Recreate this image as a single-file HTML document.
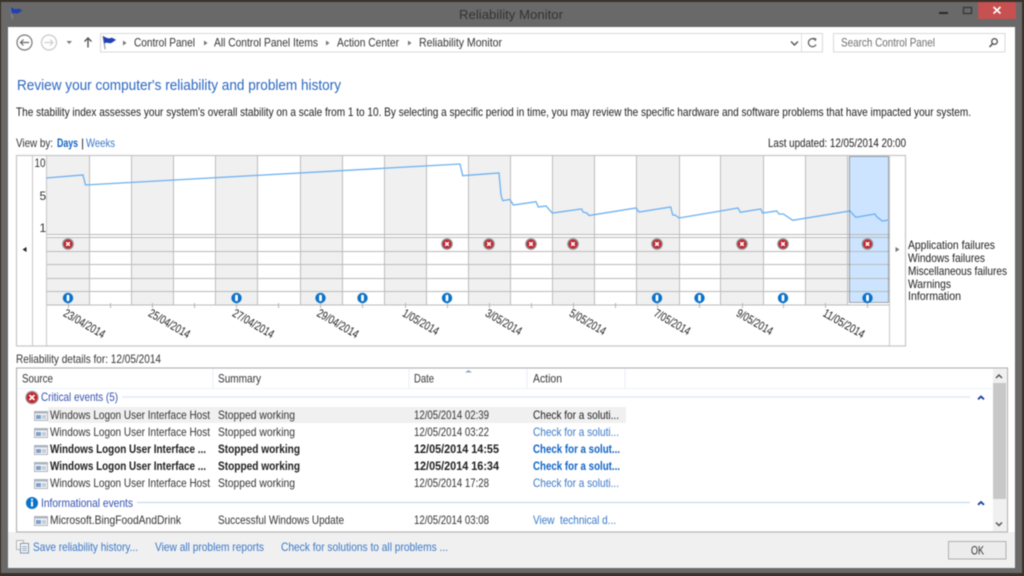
<!DOCTYPE html>
<html><head><meta charset="utf-8"><title>Reliability Monitor</title>
<style>
html,body{margin:0;padding:0;width:1024px;height:576px;overflow:hidden;background:#3a322b}
svg{display:block;filter:blur(.4px)}
text{font-family:"Liberation Sans",sans-serif;font-size:12px;fill:#1c1c1c}
.b{font-weight:bold}
.l{fill:#3a78c8}
.lb{fill:#0f62c4;font-weight:bold}
.g{fill:#3f3f3f}
.h{fill:#333}
.c{fill:#3350b0}
</style></head><body>
<svg width="1024" height="576" viewBox="0 0 1024 576" xmlns="http://www.w3.org/2000/svg">
<defs>
<g id="err"><circle r="5.8" fill="#8f8f8f"/><circle r="4.4" fill="#c4202e"/><path d="M-1.8-1.8L1.8 1.8M1.8-1.8L-1.8 1.8" stroke="#fff" stroke-width="1.5"/></g>
<g id="inf"><circle r="5.2" fill="#0b72c9"/><rect x="-1.4" y="-3.2" width="2.8" height="6.4" rx="1.2" fill="#fff"/></g>
<g id="row"><rect x="0" y="0" width="14" height="10" fill="#aeb5bd"/><rect x="1" y="1" width="12" height="8" fill="#f4f6f8"/><rect x="1" y="1" width="12" height="1.5" fill="#aab4c2"/><rect x="2" y="4" width="5" height="4" fill="#7f9ecb"/><rect x="8" y="4" width="4" height="4" fill="#c3ccd8"/></g>
<g id="chev"><path d="M-3 1.800L0-1L3 1.800" fill="none" stroke="#1a3f9c" stroke-width="1.800"/></g>
<g id="flag"><path d="M0 0L2 12" stroke="#8a8fa6" stroke-width="1" fill="none"/><path d="M0 0C3 1.500 5 3 8 1.500L12 3.500C9 5 8 7 5.500 6.500C4 6 2 6 1.200 7Z" fill="#2340b0"/></g>
</defs>

<!-- wallpaper + window frame -->
<rect width="1024" height="576" fill="#3a322b"/>
<rect x="1" y="2" width="1021" height="571" fill="#696969"/>
<rect x="8" y="27" width="1007" height="541" fill="#fff"/>
<rect x="8" y="532" width="1007" height="36" fill="#f0f0f0"/>

<!-- title bar -->
<use href="#flag" transform="translate(10.500,7)"/>
<text x="459" y="19" textLength="104" lengthAdjust="spacingAndGlyphs" style="font-size:13px;fill:#333">Reliability Monitor</text>
<rect x="939" y="12" width="9" height="2" fill="#2a2a2a"/>
<rect x="963.500" y="7.500" width="8" height="6" fill="none" stroke="#333" stroke-width="1.200"/>
<rect x="978" y="2" width="38" height="17" fill="#c75050"/>
<path d="M993.500 7L1000.500 13.500M1000.500 7L993.500 13.500" stroke="#fff" stroke-width="1.700"/>

<!-- nav -->
<circle cx="24.500" cy="42.500" r="7.500" fill="#fff" stroke="#777" stroke-width="1.200"/>
<path d="M20.500 42.500H29M23.500 39.500L20.500 42.500L23.500 45.500" fill="none" stroke="#666" stroke-width="1.200"/>
<circle cx="49" cy="42.500" r="7.500" fill="#fff" stroke="#c8c8c8" stroke-width="1.200"/>
<path d="M44.500 42.500H53M50 39.500L53 42.500L50 45.500" fill="none" stroke="#cfcfcf" stroke-width="1.200"/>
<path d="M66.500 41H72L69.200 44Z" fill="#777"/>
<path d="M88 47.500V38M84.500 41.500L88 38L91.500 41.500" fill="none" stroke="#555" stroke-width="1.400"/>
<rect x="100.500" y="33.500" width="722" height="18.500" fill="#fff" stroke="#d9d9d9"/>
<path d="M801.500 34V52" stroke="#e2e2e2"/>
<use href="#flag" transform="translate(103,36) scale(1.100)"/>
<path d="M123 40.500L126.500 43L123 45.500ZM204 40.500L207.500 43L204 45.500ZM326 40.500L329.500 43L326 45.500ZM408 40.500L411.500 43L408 45.500Z" fill="#777"/>
<text x="134" y="46.500" textLength="61" lengthAdjust="spacingAndGlyphs" class="h">Control Panel</text>
<text x="214" y="46.500" textLength="104" lengthAdjust="spacingAndGlyphs" class="h">All Control Panel Items</text>
<text x="337" y="46.500" textLength="62" lengthAdjust="spacingAndGlyphs" class="h">Action Center</text>
<text x="419" y="46.500" textLength="83" lengthAdjust="spacingAndGlyphs" class="h">Reliability Monitor</text>
<path d="M791 41.500L794.500 45L798 41.500" fill="none" stroke="#555" stroke-width="1.400"/>
<path d="M815.800 40.500A4 4 0 1 0 816 44.500" fill="none" stroke="#666" stroke-width="1.300"/><path d="M813 37.500L816.500 38.500L815.500 41.500Z" fill="#666"/>
<rect x="833.500" y="33.500" width="171.500" height="18.500" fill="#fff" stroke="#d9d9d9"/>
<text x="841" y="46.500" textLength="94" lengthAdjust="spacingAndGlyphs" style="fill:#6d6d6d">Search Control Panel</text>
<circle cx="994.500" cy="41.500" r="2.800" fill="none" stroke="#555" stroke-width="1.300"/><path d="M992.500 43.800L989.500 47" stroke="#555" stroke-width="1.600"/>

<!-- heading -->
<text x="17" y="90" textLength="324" lengthAdjust="spacingAndGlyphs" style="font-size:15px;fill:#2a66c0">Review your computer's reliability and problem history</text>
<text x="16" y="116" textLength="955" lengthAdjust="spacingAndGlyphs">The stability index assesses your system's overall stability on a scale from 1 to 10. By selecting a specific period in time, you may review the specific hardware and software problems that have impacted your system.</text>
<text x="16" y="147" textLength="37" lengthAdjust="spacingAndGlyphs" class="h">View by:</text>
<text x="57" y="147" textLength="21" lengthAdjust="spacingAndGlyphs" class="lb">Days</text>
<text x="81" y="147" class="h">|</text>
<text x="86" y="147" textLength="29" lengthAdjust="spacingAndGlyphs" class="l">Weeks</text>
<text x="768" y="147" textLength="138" lengthAdjust="spacingAndGlyphs">Last updated: 12/05/2014 20:00</text>

<!-- chart shading -->
<g fill="#f0f0f0">
<rect x="46" y="156" width="43" height="149"/><rect x="131" y="156" width="42" height="149"/><rect x="215" y="156" width="42" height="149"/><rect x="300" y="156" width="42" height="149"/><rect x="384" y="156" width="42" height="149"/><rect x="468" y="156" width="42" height="149"/><rect x="552" y="156" width="42" height="149"/><rect x="636" y="156" width="43" height="149"/><rect x="720" y="156" width="43" height="149"/><rect x="805" y="156" width="44" height="149"/>
</g>
<rect x="849" y="156" width="39.500" height="146.500" fill="#cce4ff"/>
<rect x="46" y="235" width="844" height="2" fill="#fff"/>
<rect x="849" y="235" width="39.500" height="2" fill="#cce4ff"/>
<!-- chart lines -->
<g stroke="#bcbcbc" stroke-width="1" fill="none">
<path d="M89.500 156V305M131.500 156V305M173.500 156V305M215.500 156V305M257.500 156V305M300.500 156V305M342.500 156V305M384.500 156V305M426.500 156V305M468.500 156V305M510.500 156V305M552.500 156V305M594.500 156V305M636.500 156V305M679.500 156V305M720.500 156V305M763.500 156V305M805.500 156V305M847.500 156V305"/>
<path d="M46 234.500H889M46 237.500H889M46 251.500H889M46 264.500H889M46 278.500H889M46 291.500H889M46 305H889" stroke="#bbb"/>
</g>
<path d="M68.500 303V308M110.500 303V308M152.500 303V308M194.500 303V308M236.500 303V308M278.500 303V308M320.500 303V308M362.500 303V308M405.500 303V308M447.500 303V308M489.500 303V308M531.500 303V308M573.500 303V308M615.500 303V308M657.500 303V308M699.500 303V308M742.500 303V308M783.500 303V308M825.500 303V308M867.500 303V308" stroke="#b5b5b5"/>
<rect x="849.500" y="156.500" width="39" height="146" fill="none" stroke="#555" stroke-dasharray="1 1"/>
<!-- chart frame -->
<rect x="16.500" y="155.500" width="889" height="190.500" fill="none" stroke="#c6c6c6" stroke-width="1.200"/>
<path d="M32.500 155.500V346M46.500 155.500V346M889.500 155.500V346" stroke="#c6c6c6" fill="none"/>
<!-- stability line -->
<polyline fill="none" stroke="#6cb0f2" stroke-width="1.300" points="46,178 83,175 85.500,185 460,164 462.700,175.700 499,173 501,195 502.700,200.700 510,199.500 513.300,205 536,201.700 538.300,207 546,206 552.300,213 581.700,209 583,212 586.700,213 589,215.500 636,208 639,212 670.700,207 672.700,215 675,215 679,218 720.700,211 738,208 740.300,212.300 760.700,209 762.700,213 776.700,211 779,214 783.300,214 792.700,220.300 850,211 855.700,217.300 875,214 876.700,216.700 882.300,221 888.300,220"/>
<text x="34.500" y="167" textLength="11" lengthAdjust="spacingAndGlyphs" class="h">10</text>
<text x="39.500" y="200" class="h">5</text>
<text x="39.500" y="232" class="h">1</text>
<path d="M26.500 247L22.500 249.500L26.500 252Z" fill="#222"/>
<path d="M895.500 247L899.500 249.500L895.500 252Z" fill="#777"/>
<!-- event icons -->
<use href="#err" x="68" y="244"/><use href="#err" x="447" y="244"/><use href="#err" x="489" y="244"/><use href="#err" x="531" y="244"/><use href="#err" x="573" y="244"/><use href="#err" x="657" y="244"/><use href="#err" x="742" y="244"/><use href="#err" x="783" y="244"/><use href="#err" x="867.500" y="244"/>
<use href="#inf" x="68" y="298"/><use href="#inf" x="236.500" y="298"/><use href="#inf" x="320.500" y="298"/><use href="#inf" x="362.500" y="298"/><use href="#inf" x="447" y="298"/><use href="#inf" x="657" y="298"/><use href="#inf" x="699.500" y="298"/><use href="#inf" x="783" y="298"/><use href="#inf" x="867.500" y="298"/>
<!-- dates -->
<g class="h">
<text transform="translate(62.500,315.500) rotate(30)" textLength="46" lengthAdjust="spacingAndGlyphs">23/04/2014</text>
<text transform="translate(147.500,315.500) rotate(30)" textLength="46" lengthAdjust="spacingAndGlyphs">25/04/2014</text>
<text transform="translate(231.500,315.500) rotate(30)" textLength="46" lengthAdjust="spacingAndGlyphs">27/04/2014</text>
<text transform="translate(316,315.500) rotate(30)" textLength="46" lengthAdjust="spacingAndGlyphs">29/04/2014</text>
<text transform="translate(401.500,315.500) rotate(30)" textLength="40" lengthAdjust="spacingAndGlyphs">1/05/2014</text>
<text transform="translate(484.500,315.500) rotate(30)" textLength="40" lengthAdjust="spacingAndGlyphs">3/05/2014</text>
<text transform="translate(568.500,315.500) rotate(30)" textLength="40" lengthAdjust="spacingAndGlyphs">5/05/2014</text>
<text transform="translate(653,315.500) rotate(30)" textLength="40" lengthAdjust="spacingAndGlyphs">7/05/2014</text>
<text transform="translate(735.500,315.500) rotate(30)" textLength="40" lengthAdjust="spacingAndGlyphs">9/05/2014</text>
<text transform="translate(822,315.500) rotate(30)" textLength="46" lengthAdjust="spacingAndGlyphs">11/05/2014</text>
</g>
<!-- legend -->
<text x="908" y="249" textLength="87" lengthAdjust="spacingAndGlyphs">Application failures</text>
<text x="908" y="262" textLength="77" lengthAdjust="spacingAndGlyphs">Windows failures</text>
<text x="908" y="275" textLength="99" lengthAdjust="spacingAndGlyphs">Miscellaneous failures</text>
<text x="908" y="288" textLength="43" lengthAdjust="spacingAndGlyphs">Warnings</text>
<text x="908" y="300" textLength="53" lengthAdjust="spacingAndGlyphs">Information</text>

<text x="16" y="363" textLength="145" lengthAdjust="spacingAndGlyphs" class="h">Reliability details for: 12/05/2014</text>

<!-- list -->
<rect x="16.500" y="368" width="991" height="164" fill="#fff" stroke="#b4b4b4" stroke-width="1.200"/>
<path d="M17 388.500H992" stroke="#eef4fb"/>
<path d="M213 369V388M409 369V388M527 369V388M625 369V388" stroke="#e8f0f8"/>
<text x="22" y="382.500" textLength="31" lengthAdjust="spacingAndGlyphs" class="h">Source</text>
<text x="218" y="382.500" textLength="43" lengthAdjust="spacingAndGlyphs" class="h">Summary</text>
<text x="414" y="382.500" textLength="20" lengthAdjust="spacingAndGlyphs" class="h">Date</text>
<text x="533" y="382.500" textLength="29" lengthAdjust="spacingAndGlyphs" class="h">Action</text>
<path d="M465 372.500L468.500 370L472 372.500Z" fill="#8aa6c4"/>

<!-- groups -->
<circle cx="32" cy="397.500" r="6.700" fill="#9a9a9a"/><circle cx="32" cy="397.500" r="5.400" fill="#c8202c"/><path d="M29.500 395L34.500 400M34.500 395L29.500 400" stroke="#fff" stroke-width="1.700"/>
<text x="41" y="401" textLength="77" lengthAdjust="spacingAndGlyphs" class="c">Critical events (5)</text>
<rect x="122" y="396" width="848" height="2" fill="#e8eff8"/>
<use href="#chev" x="981" y="397.500"/>
<circle cx="32" cy="503" r="6" fill="#0b72c9"/><rect x="31" y="501.500" width="2" height="5" fill="#fff"/><rect x="31" y="498.800" width="2" height="1.800" fill="#fff"/>
<text x="41" y="507" textLength="92" lengthAdjust="spacingAndGlyphs" class="c">Informational events</text>
<rect x="137" y="502" width="833" height="1" fill="#bcd2ea"/>
<use href="#chev" x="981" y="503"/>

<rect x="48" y="407" width="578" height="16" fill="#f0f0f0"/>
<use href="#row" x="34" y="411"/><use href="#row" x="34" y="428"/><use href="#row" x="34" y="445"/><use href="#row" x="34" y="462"/><use href="#row" x="34" y="479"/><use href="#row" x="34" y="516"/>

<text x="50" y="419" textLength="160" lengthAdjust="spacingAndGlyphs" class="h">Windows Logon User Interface Host</text>
<text x="218" y="419" textLength="77" lengthAdjust="spacingAndGlyphs" class="h">Stopped working</text>
<text x="414" y="419" textLength="75" lengthAdjust="spacingAndGlyphs" class="h">12/05/2014 02:39</text>
<text x="533" y="419" textLength="86" lengthAdjust="spacingAndGlyphs">Check for a soluti...</text>

<text x="50" y="436" textLength="160" lengthAdjust="spacingAndGlyphs" class="h">Windows Logon User Interface Host</text>
<text x="218" y="436" textLength="77" lengthAdjust="spacingAndGlyphs" class="h">Stopped working</text>
<text x="414" y="436" textLength="75" lengthAdjust="spacingAndGlyphs" class="h">12/05/2014 03:22</text>
<text x="533" y="436" textLength="86" lengthAdjust="spacingAndGlyphs" class="l">Check for a soluti...</text>

<text x="50" y="453" textLength="156" lengthAdjust="spacingAndGlyphs" class="b">Windows Logon User Interface ...</text>
<text x="218" y="453" textLength="82" lengthAdjust="spacingAndGlyphs" class="b">Stopped working</text>
<text x="414" y="453" textLength="85" lengthAdjust="spacingAndGlyphs" class="b">12/05/2014 14:55</text>
<text x="533" y="453" textLength="87" lengthAdjust="spacingAndGlyphs" class="lb">Check for a solut...</text>

<text x="50" y="470" textLength="156" lengthAdjust="spacingAndGlyphs" class="b">Windows Logon User Interface ...</text>
<text x="218" y="470" textLength="82" lengthAdjust="spacingAndGlyphs" class="b">Stopped working</text>
<text x="414" y="470" textLength="85" lengthAdjust="spacingAndGlyphs" class="b">12/05/2014 16:34</text>
<text x="533" y="470" textLength="87" lengthAdjust="spacingAndGlyphs" class="lb">Check for a solut...</text>

<text x="50" y="487" textLength="160" lengthAdjust="spacingAndGlyphs" class="h">Windows Logon User Interface Host</text>
<text x="218" y="487" textLength="77" lengthAdjust="spacingAndGlyphs" class="h">Stopped working</text>
<text x="414" y="487" textLength="75" lengthAdjust="spacingAndGlyphs" class="h">12/05/2014 17:28</text>
<text x="533" y="487" textLength="86" lengthAdjust="spacingAndGlyphs" class="l">Check for a soluti...</text>

<text x="50" y="524" textLength="131" lengthAdjust="spacingAndGlyphs" class="h">Microsoft.BingFoodAndDrink</text>
<text x="218" y="524" textLength="126" lengthAdjust="spacingAndGlyphs" class="h">Successful Windows Update</text>
<text x="414" y="524" textLength="75" lengthAdjust="spacingAndGlyphs" class="h">12/05/2014 03:08</text>
<text x="533" y="524" textLength="83" lengthAdjust="spacingAndGlyphs" class="l" xml:space="preserve">View  technical d...</text>

<!-- scrollbar -->
<rect x="993" y="369" width="14" height="162" fill="#f0f0f0"/>
<rect x="993" y="383" width="13" height="116" fill="#c8c8c8"/>
<path d="M996 378L999 375L1002 378" fill="none" stroke="#555" stroke-width="1.500"/>
<path d="M996 522.500L999 525.500L1002 522.500" fill="none" stroke="#555" stroke-width="1.500"/>

<!-- footer -->
<rect x="16.500" y="540.500" width="7" height="9" fill="#f6f6f6" stroke="#b5b5b5"/>
<rect x="20.500" y="543.500" width="8" height="9.500" fill="#fff" stroke="#7f95ad"/>
<path d="M22 546.500H27M22 548.500H27M22 550.500H27" stroke="#8aa0b8"/>
<text x="33" y="551" textLength="105" lengthAdjust="spacingAndGlyphs" class="l">Save reliability history...</text>
<text x="155" y="551" textLength="109" lengthAdjust="spacingAndGlyphs" class="l">View all problem reports</text>
<text x="281" y="551" textLength="167" lengthAdjust="spacingAndGlyphs" class="l">Check for solutions to all problems ...</text>
<rect x="948.500" y="541.500" width="57.500" height="17.500" fill="#ececec" stroke="#b0b0b0"/>
<text x="971" y="554.500" textLength="13" lengthAdjust="spacingAndGlyphs" class="h">OK</text>
</svg>
</body></html>
